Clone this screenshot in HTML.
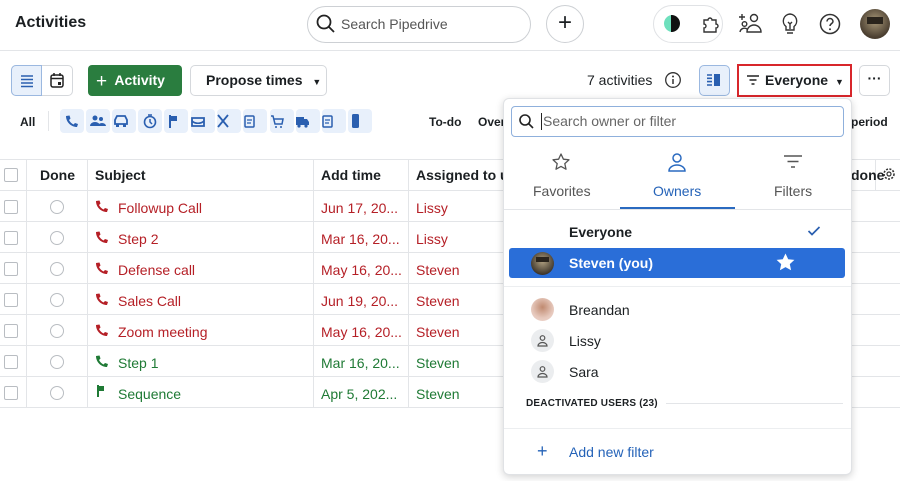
<!DOCTYPE html>
<html><head><meta charset="utf-8"><style>
*{box-sizing:border-box;margin:0;padding:0}
body{width:900px;height:481px;overflow:hidden;background:#fff;font-family:"Liberation Sans",Arial,sans-serif;color:#1b1f22;position:relative;font-size:14px}
.a{position:absolute}
.btn{position:absolute;border:1px solid #d5d8dc;border-radius:5px;background:#fff}
.hl{position:absolute;left:0;width:900px;height:1px;background:#e3e5e8}
.vl{position:absolute;width:1px;background:#e3e5e8}
.ico{position:absolute;top:109px;width:24px;height:24px;border-radius:4px;background:#e8f0fb}
.cb{position:absolute;left:4px;width:14px;height:14px;border:1.5px solid #b9bdc2;border-radius:2px}
.rd{position:absolute;left:50px;width:14px;height:14px;border:1.5px solid #b9bdc2;border-radius:50%}
.red{color:#b51f26}.grn{color:#1f7a35}
.t{position:absolute;font-size:14px;white-space:nowrap}
</style></head><body>
<!-- top bar -->
<div class="a" style="left:15px;top:14px;font-size:16px;font-weight:bold">Activities</div>
<div class="a" style="left:307px;top:6px;width:224px;height:37px;border:1px solid #cdd0d4;border-radius:19px"></div>
<svg class="a" style="left:315px;top:13px" width="22" height="22" viewBox="0 0 22 22"><circle cx="9" cy="9" r="6.5" fill="none" stroke="#222" stroke-width="1.8"/><line x1="14" y1="14" x2="19" y2="19" stroke="#222" stroke-width="1.8"/></svg>
<div class="a" style="left:341px;top:16px;font-size:14px;color:#555">Search Pipedrive</div>
<div class="a" style="left:546px;top:5px;width:38px;height:38px;border:1px solid #cdd0d4;border-radius:50%;text-align:center;line-height:34px;font-size:24px;font-weight:300">+</div>
<div class="a" style="left:653px;top:5px;width:70px;height:38px;border:1px solid #e0e2e5;border-radius:19px"></div>
<div class="a" style="left:664px;top:15px;width:9px;height:17px;background:#6ee0bd;border-radius:9px 0 0 9px"></div>
<div class="a" style="left:671px;top:15px;width:9px;height:17px;background:#111;border-radius:0 9px 9px 0"></div>
<svg class="a" style="left:700px;top:13px" width="20" height="22" viewBox="0 0 20 22"><path d="M4 7h4a2 2 0 114 0h4v4a2 2 0 110 4v4H4v-4a2 2 0 100-4z" fill="none" stroke="#333" stroke-width="1.4"/></svg>
<svg class="a" style="left:738px;top:11px" width="26" height="24" viewBox="0 0 26 24"><path d="M4 3v6M1 6h6" stroke="#333" stroke-width="1.4"/><circle cx="16" cy="7" r="3.5" fill="none" stroke="#333" stroke-width="1.4"/><circle cx="6.5" cy="13" r="2.3" fill="none" stroke="#333" stroke-width="1.4"/><path d="M9 21a7 7 0 0114 0zM2 21a4.5 4.5 0 017 -3" fill="none" stroke="#333" stroke-width="1.4"/></svg>
<svg class="a" style="left:780px;top:12px" width="20" height="24" viewBox="0 0 20 24"><path d="M10 2a7 7 0 00-4 12.5V18h8v-3.5A7 7 0 0010 2zM7 21h6M8 10l2 2 2-2M10 12v5" fill="none" stroke="#333" stroke-width="1.4"/></svg>
<svg class="a" style="left:818px;top:12px" width="24" height="24" viewBox="0 0 24 24"><circle cx="12" cy="12" r="9.5" fill="none" stroke="#333" stroke-width="1.5"/><path d="M9 9.5a3 3 0 116 0c0 2-3 2-3 4.5" fill="none" stroke="#333" stroke-width="1.5"/><circle cx="12" cy="17.3" r="1" fill="#333"/></svg>
<div class="a" style="left:860px;top:9px;width:30px;height:30px;border-radius:50%;background:radial-gradient(circle at 50% 40%,#a89878,#4a3e30 70%)"></div>
<div class="a" style="left:867px;top:17px;width:16px;height:7px;background:#2a241c"></div>
<div class="hl" style="top:50px"></div>
<!-- toolbar -->
<div class="btn" style="left:11px;top:65px;width:62px;height:31px"></div>
<div class="a" style="left:11px;top:65px;width:31px;height:31px;background:#e8f0fb;border:1px solid #9bb8e0;border-radius:5px 0 0 5px"></div>
<svg class="a" style="left:19px;top:73px" width="16" height="16"><path d="M2 3h12M2 6.5h12M2 10h12M2 13.5h12" stroke="#2a5fb0" stroke-width="1.5"/></svg>
<svg class="a" style="left:49px;top:72px" width="16" height="17"><rect x="2" y="3" width="12" height="12" rx="2" fill="none" stroke="#222" stroke-width="1.5"/><path d="M2 6.5h12M5 1v3M11 1v3" stroke="#222" stroke-width="1.5"/><rect x="9" y="10" width="3" height="3" fill="#222"/></svg>
<div class="a" style="left:88px;top:65px;width:94px;height:31px;background:#2a7d3f;border-radius:4px;color:#fff;font-weight:bold;font-size:14px;line-height:31px;padding-left:8px"><span style="font-size:19px;font-weight:normal;vertical-align:-2px">+</span>&nbsp; Activity</div>
<div class="btn" style="left:190px;top:65px;width:137px;height:31px;font-weight:bold;font-size:14px;line-height:29px;padding-left:15px">Propose times <span style="font-size:9px;margin-left:6px">▼</span></div>
<div class="a" style="left:587px;top:72px;font-size:14px">7 activities</div>
<svg class="a" style="left:664px;top:71px" width="18" height="18"><circle cx="9" cy="9" r="7.3" fill="none" stroke="#333" stroke-width="1.3"/><path d="M9 8v5" stroke="#333" stroke-width="1.5"/><circle cx="9" cy="5.5" r="1" fill="#333"/></svg>
<div class="a" style="left:699px;top:65px;width:31px;height:31px;background:#e8f0fb;border:1px solid #9bb8e0;border-radius:5px"></div>
<svg class="a" style="left:706px;top:73px" width="16" height="14"><path d="M1 2h5M1 5.3h5M1 8.6h5M1 12h5" stroke="#2a5fb0" stroke-width="1.6"/><rect x="8" y="1" width="6" height="12" fill="#2a5fb0"/></svg>
<div class="a" style="left:737px;top:64px;width:115px;height:33px;border:2px solid #d8262b"></div>
<svg class="a" style="left:746px;top:74px" width="14" height="12"><path d="M1 2h12M3.5 6h7M5.5 10h3" stroke="#222" stroke-width="1.4"/></svg>
<div class="a" style="left:765px;top:72px;font-size:14px;font-weight:bold">Everyone <span style="font-size:9px;margin-left:3px">▼</span></div>
<div class="btn" style="left:859px;top:65px;width:31px;height:31px;text-align:center;font-weight:bold;line-height:24px">···</div>
<!-- filter row -->
<div class="a" style="left:20px;top:115px;font-size:12px;font-weight:bold">All</div>
<div class="vl" style="left:48px;top:111px;height:20px"></div>
<div class="ico" style="left:60px"></div><div class="ico" style="left:86px"></div><div class="ico" style="left:112px"></div><div class="ico" style="left:138px"></div><div class="ico" style="left:164px"></div><div class="ico" style="left:191px"></div><div class="ico" style="left:217px"></div><div class="ico" style="left:243px"></div><div class="ico" style="left:270px"></div><div class="ico" style="left:296px"></div><div class="ico" style="left:322px"></div><div class="ico" style="left:348px"></div>
<svg class="a" style="left:60px;top:109px" width="312" height="24" viewBox="0 0 312 24" fill="#2a5fb0" stroke="#2a5fb0">
<path d="M6 7c0 6 5 11 11 11l1-3-3-1-1.5 1.5c-2-1-3.5-2.5-4.5-4.5L10.5 9.5 9.5 6.5z" stroke="none"/>
<circle cx="35" cy="9" r="2.5" stroke="none"/><circle cx="41" cy="10" r="2" stroke="none"/><path d="M30 17a5 4 0 0110 0zM38 17a4 3 0 018 0z" stroke="none"/>
<path d="M55 15v-4l2-4h8l2 4v4z" fill="none" stroke-width="1.8"/><rect x="56" y="15" width="3" height="3" stroke="none"/><rect x="63" y="15" width="3" height="3" stroke="none"/>
<circle cx="90" cy="13" r="5.5" fill="none" stroke-width="1.6"/><path d="M90 10v3l2 2M88 6h4" fill="none" stroke-width="1.5"/>
<path d="M110 6v13" stroke-width="2"/><rect x="111" y="7" width="6" height="5" stroke="none"/>
<path d="M132 9h12v8h-12z" fill="none" stroke-width="1.8"/><path d="M132 12c3 3 9 3 12 0" fill="none" stroke-width="1.6"/>
<path d="M158 6l10 12M168 6l-10 12" stroke-width="1.8"/>
<rect x="185" y="7" width="9" height="11" rx="1" fill="none" stroke-width="1.5"/><path d="M187 11h5M187 14h4" stroke-width="1.2"/>
<path d="M211 7h2l2 8h7l1-5h-9" fill="none" stroke-width="1.5"/><circle cx="216" cy="18" r="1" stroke="none"/><circle cx="221" cy="18" r="1" stroke="none"/>
<rect x="236" y="8" width="8" height="8" stroke="none"/><path d="M244 10h3l2 3v3h-5z" stroke="none"/><circle cx="239" cy="17" r="1.6" stroke="none"/><circle cx="246" cy="17" r="1.6" stroke="none"/>
<rect x="263" y="7" width="9" height="11" rx="1" fill="none" stroke-width="1.5"/><path d="M265 11h5M265 14h4" stroke-width="1.2"/>
<rect x="292" y="5" width="7" height="14" rx="1.5" stroke="none"/>
</svg>
<div class="a" style="left:429px;top:115px;font-size:12px;font-weight:bold">To-do</div>
<div class="a" style="left:478px;top:115px;font-size:12px;font-weight:bold">Over</div>
<div class="a" style="left:851px;top:115px;font-size:12px;font-weight:bold">period</div>
<!-- table -->
<div class="hl" style="top:159px"></div><div class="hl" style="top:190px"></div>
<div class="hl" style="top:221px"></div><div class="hl" style="top:252px"></div><div class="hl" style="top:283px"></div><div class="hl" style="top:314px"></div><div class="hl" style="top:345px"></div><div class="hl" style="top:376px"></div><div class="hl" style="top:407px"></div>
<div class="vl" style="left:26px;top:159px;height:248px"></div>
<div class="vl" style="left:87px;top:159px;height:248px"></div>
<div class="vl" style="left:313px;top:159px;height:248px"></div>
<div class="vl" style="left:408px;top:159px;height:248px"></div>
<div class="vl" style="left:875px;top:159px;height:31px"></div>
<div class="cb" style="top:168px"></div>
<div class="t" style="left:40px;top:167px;font-weight:bold">Done</div>
<div class="t" style="left:95px;top:167px;font-weight:bold">Subject</div>
<div class="t" style="left:321px;top:167px;font-weight:bold">Add time</div>
<div class="t" style="left:416px;top:167px;font-weight:bold">Assigned to u</div>
<div class="t" style="left:851px;top:167px;font-weight:bold">done</div>
<svg class="a" style="left:882px;top:167px" width="14" height="14"><circle cx="7" cy="7" r="2" fill="none" stroke="#333" stroke-width="1.2"/><circle cx="7" cy="7" r="5" fill="none" stroke="#333" stroke-width="1.6" stroke-dasharray="2 1.4"/></svg>

<div class="cb" style="top:200px"></div><div class="rd" style="top:200px"></div>
<div class="cb" style="top:231px"></div><div class="rd" style="top:231px"></div>
<div class="cb" style="top:262px"></div><div class="rd" style="top:262px"></div>
<div class="cb" style="top:293px"></div><div class="rd" style="top:293px"></div>
<div class="cb" style="top:324px"></div><div class="rd" style="top:324px"></div>
<div class="cb" style="top:355px"></div><div class="rd" style="top:355px"></div>
<div class="cb" style="top:386px"></div><div class="rd" style="top:386px"></div>

<svg class="a" style="left:95px;top:199px" width="14" height="200" viewBox="0 0 14 200">
<g fill="#b51f26"><path d="M1 2c0 6 5 11 11 11l1-3-3-1-1.5 1.5c-2-1-3.5-2.5-4.5-4.5L5.5 4.5 4.5 1.5z"/>
<path transform="translate(0,31)" d="M1 2c0 6 5 11 11 11l1-3-3-1-1.5 1.5c-2-1-3.5-2.5-4.5-4.5L5.5 4.5 4.5 1.5z"/>
<path transform="translate(0,62)" d="M1 2c0 6 5 11 11 11l1-3-3-1-1.5 1.5c-2-1-3.5-2.5-4.5-4.5L5.5 4.5 4.5 1.5z"/>
<path transform="translate(0,93)" d="M1 2c0 6 5 11 11 11l1-3-3-1-1.5 1.5c-2-1-3.5-2.5-4.5-4.5L5.5 4.5 4.5 1.5z"/>
<path transform="translate(0,124)" d="M1 2c0 6 5 11 11 11l1-3-3-1-1.5 1.5c-2-1-3.5-2.5-4.5-4.5L5.5 4.5 4.5 1.5z"/></g>
<g fill="#1f7a35"><path transform="translate(0,155)" d="M1 2c0 6 5 11 11 11l1-3-3-1-1.5 1.5c-2-1-3.5-2.5-4.5-4.5L5.5 4.5 4.5 1.5z"/>
<rect x="2" y="186" width="2" height="12"/><rect x="4" y="187" width="5" height="5"/></g>
</svg>
<div class="t red" style="left:118px;top:200px">Followup Call</div><div class="t red" style="left:321px;top:200px">Jun 17, 20...</div><div class="t red" style="left:416px;top:200px">Lissy</div>
<div class="t red" style="left:118px;top:231px">Step 2</div><div class="t red" style="left:321px;top:231px">Mar 16, 20...</div><div class="t red" style="left:416px;top:231px">Lissy</div>
<div class="t red" style="left:118px;top:262px">Defense call</div><div class="t red" style="left:321px;top:262px">May 16, 20...</div><div class="t red" style="left:416px;top:262px">Steven</div>
<div class="t red" style="left:118px;top:293px">Sales Call</div><div class="t red" style="left:321px;top:293px">Jun 19, 20...</div><div class="t red" style="left:416px;top:293px">Steven</div>
<div class="t red" style="left:118px;top:324px">Zoom meeting</div><div class="t red" style="left:321px;top:324px">May 16, 20...</div><div class="t red" style="left:416px;top:324px">Steven</div>
<div class="t grn" style="left:118px;top:355px">Step 1</div><div class="t grn" style="left:321px;top:355px">Mar 16, 20...</div><div class="t grn" style="left:416px;top:355px">Steven</div>
<div class="t grn" style="left:118px;top:386px">Sequence</div><div class="t grn" style="left:321px;top:386px">Apr 5, 202...</div><div class="t grn" style="left:416px;top:386px">Steven</div>

<!-- dropdown -->
<div class="a" style="left:503px;top:98px;width:349px;height:377px;background:#fff;border:1px solid #e0e2e5;border-radius:6px;box-shadow:0 2px 8px rgba(0,0,0,.18)"></div>
<div class="a" style="left:511px;top:106px;width:333px;height:31px;border:1px solid #8fb0dc;border-radius:4px"></div>
<svg class="a" style="left:518px;top:113px" width="17" height="17"><circle cx="7" cy="7" r="5" fill="none" stroke="#222" stroke-width="1.6"/><line x1="10.5" y1="10.5" x2="15" y2="15" stroke="#222" stroke-width="1.6"/></svg>
<div class="a" style="left:541px;top:113px;width:1px;height:17px;background:#222"></div>
<div class="a" style="left:543px;top:113px;font-size:14px;color:#666">Search owner or filter</div>
<svg class="a" style="left:551px;top:152px" width="20" height="20"><path d="M10 2l2.4 5.2 5.6.6-4.2 3.8 1.2 5.6L10 14.4 5 17.2l1.2-5.6L2 7.8l5.6-.6z" fill="none" stroke="#555" stroke-width="1.3" stroke-linejoin="round"/></svg>
<svg class="a" style="left:666px;top:151px" width="22" height="22"><circle cx="11" cy="7" r="4" fill="none" stroke="#2a6ac0" stroke-width="1.5"/><path d="M3 20a8 6 0 0116 0z" fill="none" stroke="#2a6ac0" stroke-width="1.5"/></svg>
<svg class="a" style="left:783px;top:154px" width="20" height="16"><path d="M1 2h18M4.5 7.5h11M8 13h4" stroke="#555" stroke-width="1.4"/></svg>
<div class="a" style="left:533px;top:183px;font-size:14px;color:#555">Favorites</div>
<div class="a" style="left:653px;top:183px;font-size:14px;color:#2563b8">Owners</div>
<div class="a" style="left:774px;top:183px;font-size:14px;color:#555">Filters</div>
<div class="a" style="left:620px;top:207px;width:115px;height:2px;background:#2a6ac0"></div>
<div class="a" style="left:504px;top:209px;width:347px;height:1px;background:#e3e5e8"></div>
<div class="a" style="left:569px;top:224px;font-size:14px;font-weight:bold">Everyone</div>
<svg class="a" style="left:807px;top:225px" width="14" height="12"><path d="M1.5 6l3.5 3.5 7.5-7.5" fill="none" stroke="#2a5fb0" stroke-width="1.7"/></svg>
<div class="a" style="left:509px;top:248px;width:336px;height:30px;background:#2a6ed8;border-radius:3px"></div>
<div class="a" style="left:531px;top:252px;width:23px;height:23px;border-radius:50%;background:radial-gradient(circle at 50% 40%,#b0a080,#3a3228 75%)"></div>
<div class="a" style="left:536px;top:257px;width:13px;height:5px;background:#2a241c"></div>
<div class="a" style="left:569px;top:255px;font-size:14px;font-weight:bold;color:#fff">Steven (you)</div>
<svg class="a" style="left:775px;top:252px" width="21" height="20"><path d="M10.5 1.5l2.7 5.7 6.2.7-4.6 4.2 1.3 6.2-5.6-3.2-5.6 3.2 1.3-6.2L1.6 7.9l6.2-.7z" fill="#fff"/></svg>
<div class="a" style="left:504px;top:286px;width:347px;height:1px;background:#eceef0"></div>
<div class="a" style="left:531px;top:298px;width:23px;height:23px;border-radius:50%;background:radial-gradient(circle at 50% 40%,#c08a70,#e6c8bc 60%,#efd8d0)"></div>
<div class="a" style="left:569px;top:302px;font-size:14px">Breandan</div>
<div class="a" style="left:531px;top:329px;width:23px;height:23px;border-radius:50%;background:#ebedef"></div>
<div class="a" style="left:531px;top:360px;width:23px;height:23px;border-radius:50%;background:#ebedef"></div>
<svg class="a" style="left:535px;top:333px" width="15" height="46"><g fill="none" stroke="#555" stroke-width="1.2"><circle cx="7.5" cy="5" r="2.3"/><path d="M3 13a4.5 3.5 0 019 0z"/><circle cx="7.5" cy="36" r="2.3"/><path d="M3 44a4.5 3.5 0 019 0z"/></g></svg>
<div class="a" style="left:569px;top:333px;font-size:14px">Lissy</div>
<div class="a" style="left:569px;top:364px;font-size:14px">Sara</div>
<div class="a" style="left:526px;top:398px;font-size:10px;font-weight:bold;letter-spacing:.2px">DEACTIVATED USERS (23)</div>
<div class="a" style="left:666px;top:403px;width:177px;height:1px;background:#e3e5e8"></div>
<div class="a" style="left:504px;top:428px;width:347px;height:1px;background:#eceef0"></div>
<div class="a" style="left:537px;top:441px;font-size:18px;color:#2563b8">+</div>
<div class="a" style="left:569px;top:444px;font-size:14px;color:#2563b8">Add new filter</div>
</body></html>
